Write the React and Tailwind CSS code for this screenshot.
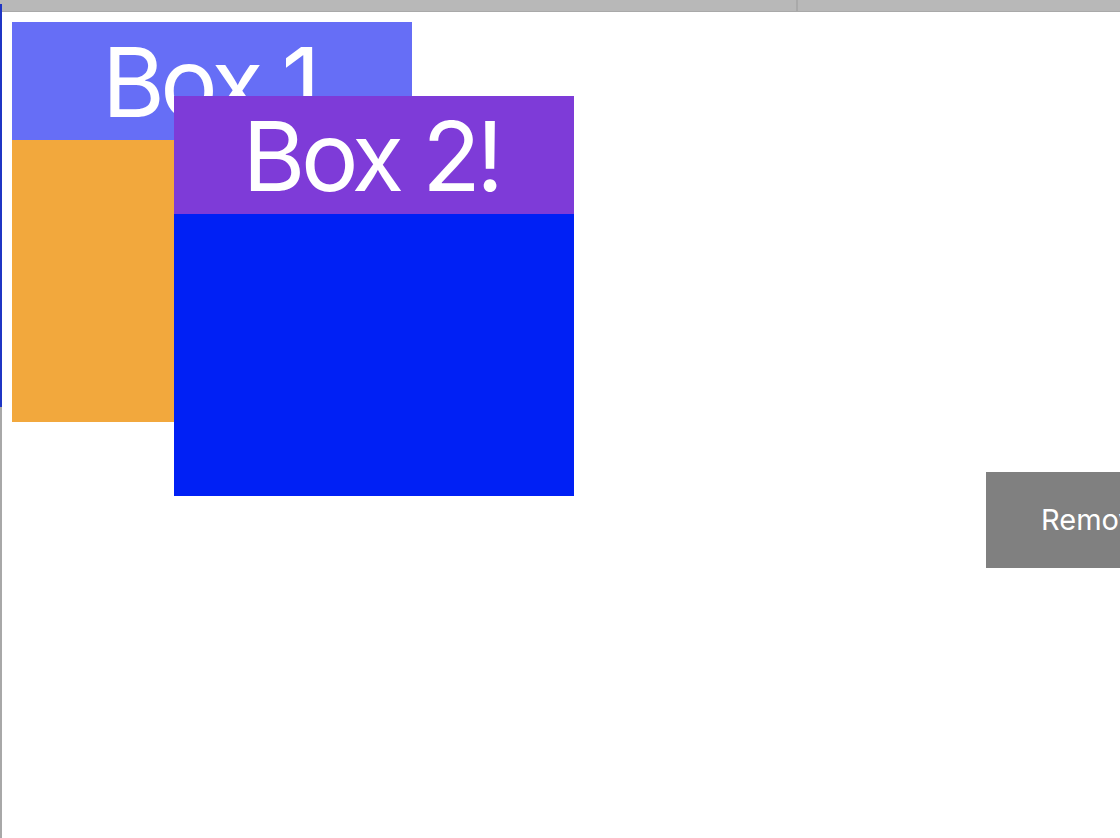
import React from 'react'

export default function App() {
  return (
    <div className="relative flex h-[838px] w-[1120px] overflow-hidden bg-white" style={{ fontFamily: 'Inter, "Noto Sans", sans-serif' }}>
      {/* window edge */}
      <div className="flex w-[2px] shrink-0 flex-col">
        <div className="h-[4px] bg-[#b8b8b8]" />
        <div className="h-[403px] bg-[#1f35c4]" />
        <div className="flex-1 bg-[#a8a8a8]" />
      </div>

      <div className="flex min-w-0 flex-1 flex-col">
        {/* top bar */}
        <div className="flex h-[12px] shrink-0 border-b border-[#a9a9a9] bg-[#b8b8b8]">
          <div className="w-[796px] border-r-2 border-[#a9a9a9]" />
          <div className="flex-1" />
        </div>

        <div className="relative flex-1">
          <div className="ml-[10px] mt-[10px] flex h-[400px] w-[400px] flex-col">
            <div className="flex h-[118px] items-center justify-center bg-[#666ef6] pr-[6px] pt-[2px] text-[96px] leading-none tracking-[-4.5px] text-white">
              Box 1
            </div>
            <div className="flex-1 bg-[#f2a83d]" />
          </div>

          {/* box 2 lies over box 1 */}
          <div className="absolute left-[172px] top-[84px] flex h-[400px] w-[400px] flex-col">
            <div className="flex h-[118px] items-center justify-center bg-[#7e3bd8] pr-[6px] pt-[2px] text-[96px] leading-none tracking-[-4.5px] text-white">
              Box 2!
            </div>
            <div className="flex-1 bg-[#0020f5]" />
          </div>

          <button className="ml-[984px] mt-[50px] flex h-[96px] w-[240px] shrink-0 items-center whitespace-nowrap bg-[#808080] pl-[55px] text-[29px] text-white">
            Remove Box 2
          </button>
        </div>
      </div>
    </div>
  )
}
